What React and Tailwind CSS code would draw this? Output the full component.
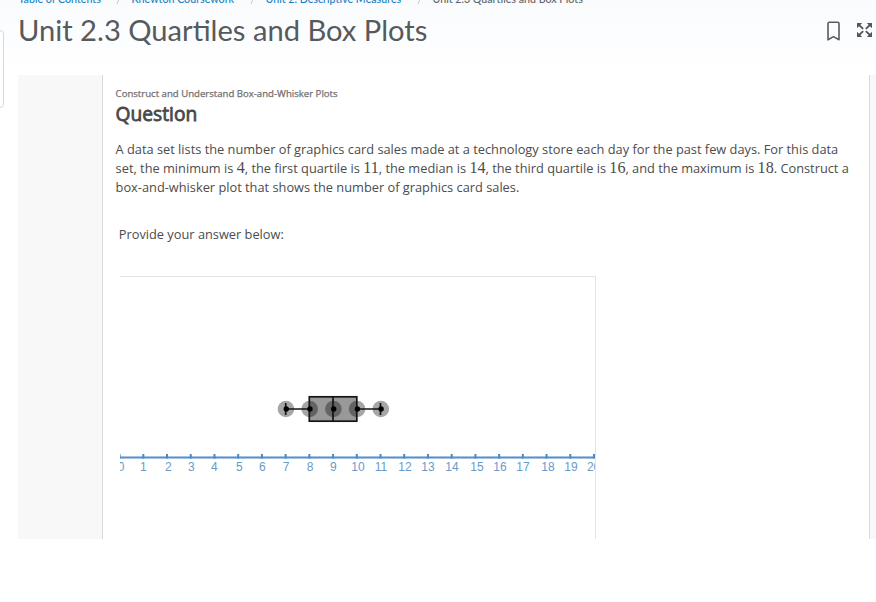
const LABELS = [121, 143.4, 168.4, 191.4, 214.4, 239.4, 262.4, 286, 310, 333.4, 358, 381, 405, 428, 452, 477, 500, 523, 548, 571, 593.6];
const tickX = (n) => 119.6 + n * 23.72;
const HANDLES = [7, 8, 9, 10, 11];

function Slash() {
  return (
    <svg width="6" height="12" viewBox="0 0 6 12" className="shrink-0" fill="none" stroke="#c3cad1">
      <path d="M5 1 L1 11" />
    </svg>
  );
}

function Breadcrumbs() {
  return (
    <nav className="-mt-[8px] flex h-[14px] items-center pl-[18.5px] font-[Lato,sans-serif] text-[10.67px] leading-[14px] font-medium whitespace-nowrap text-[#1a7fc4]">
      <span className="w-[97px]">Table of Contents</span>
      <Slash />
      <span className="ml-[10px] w-[118px]">Knewton Coursework</span>
      <Slash />
      <span className="ml-[10px] w-[151px]">Unit 2. Descriptive Measures</span>
      <Slash />
      <span className="ml-[10px] text-[#606468]">Unit 2.3 Quartiles and Box Plots</span>
    </nav>
  );
}

function BookmarkIcon() {
  return (
    <svg width="13" height="20" viewBox="0 0 13 20" fill="none" stroke="#595c60" strokeWidth="1.6" strokeLinejoin="round">
      <path d="M2.3 1.2H10.7Q12 1.2 12 2.5V18.8L6.5 15.6L1 18.8V2.5Q1 1.2 2.3 1.2Z" />
    </svg>
  );
}

function ExpandIcon() {
  return (
    <svg width="15" height="14" viewBox="0 0 15 14" fill="#54575a" stroke="#54575a">
      <path stroke="none" d="M0 0H5.2L0 5.2ZM15 0V5.2L9.8 0ZM0 14V8.8L5.2 14ZM15 14H9.8L15 8.8Z" />
      <path strokeWidth="1.8" d="M1.5 1.5L6.2 5.9M13.5 1.5L8.8 5.9M1.5 12.5L6.2 8.1M13.5 12.5L8.8 8.1" />
    </svg>
  );
}

function Num({ children }) {
  return <span className="font-['Liberation_Serif',serif] text-[16.15px] leading-none">{children}</span>;
}

function Plot() {
  return (
    <svg width="475" height="262" viewBox="120 277 475 262" className="block">
      <rect x="309" y="397" width="48" height="24" fill="#999999" />
      {HANDLES.map((n) => (
        <circle key={n} cx={tickX(n) + 0.3} cy="409" r="8.3" fill="#000" fillOpacity="0.35" />
      ))}
      <g stroke="#151515" strokeWidth="1.7" fill="none">
        <rect x="309.3" y="396.8" width="47.5" height="24.4" />
        <path d="M333 396V422M286 409H309M357 409H381M285.7 403V415M380.5 403V415" />
      </g>
      {HANDLES.map((n) => (
        <circle key={n} cx={tickX(n) + 0.6} cy="409" r="2.7" fill="#000" />
      ))}
      <rect x="120" y="456" width="475" height="3" fill="#a5c4e4" />
      <rect x="120" y="457" width="475" height="1" fill="#5a90c6" />
      {LABELS.map((x, n) => (
        <g key={n}>
          <rect x={tickX(n) - 1} y="454" width="2" height="4.5" fill="#4c88c2" />
          <text x={x} y="471" textAnchor="middle" fontSize="12" fill="#699aca" className="font-['Liberation_Sans',sans-serif]">
            {n}
          </text>
        </g>
      ))}
    </svg>
  );
}

export default function App() {
  return (
    <div className="h-[602px] w-[876px] overflow-hidden bg-white">
      <header className="flex h-[75px] flex-col bg-linear-to-b from-[#f9fbfd] to-white">
        <Breadcrumbs />
        <div className="flex h-[69px]">
          <div className="-ml-1 mt-[24px] h-[78px] w-2 shrink-0 rounded-[4px] border border-[#d5d8df] bg-white" />
          <h1 className="ml-[14px] mt-[6px] w-[809px] font-[Lato,sans-serif] text-[29.13px] leading-[36px] whitespace-nowrap text-[#565a5c]">
            Unit 2.3 Quartiles and Box Plots
          </h1>
          <div className="mt-[15px] w-[30px] shrink-0"><BookmarkIcon /></div>
          <div className="mt-[17px] w-[15px] shrink-0"><ExpandIcon /></div>
        </div>
      </header>
      <main className="ml-[18px] flex h-[464px] bg-[#f8f8f8] font-['Open_Sans',sans-serif] text-[#4c4c4c]">
        <section className="ml-[84px] w-[768px] shrink-0 border-x border-[#d9d9d9] bg-white pl-[12.6px]">
          <p className="pt-[11px] text-[9.6px] leading-[15px] text-[#707070] [-webkit-text-stroke:0.25px_#707070]">Construct and Understand Box-and-Whisker Plots</p>
          <h2 className="text-[19.2px] leading-[26px] font-normal text-[#484848] [-webkit-text-stroke:0.8px_#484848]">Question</h2>
          <div className="mt-[13px] text-[12.8px] leading-[19px] whitespace-nowrap">
            <p className="h-[19px]">A data set lists the number of graphics card sales made at a technology store each day for the past few days. For this data</p>
            <p className="h-[19px]">
              set, the minimum is <Num>4</Num>, the first quartile is <Num>11</Num>, the median is <Num>14</Num>, the third quartile is <Num>16</Num>, and the maximum is <Num>18</Num>. Construct a
            </p>
            <p className="h-[19px]">box-and-whisker plot that shows the number of graphics card sales.</p>
          </div>
          <p className="mt-[28px] pl-[3.2px] text-[12.8px] leading-[19px]">Provide your answer below:</p>
          <div className="ml-[4.4px] mt-[32px] w-[476px] border-t border-r border-[#e4e4e4]">
            <Plot />
          </div>
        </section>
      </main>
    </div>
  );
}
